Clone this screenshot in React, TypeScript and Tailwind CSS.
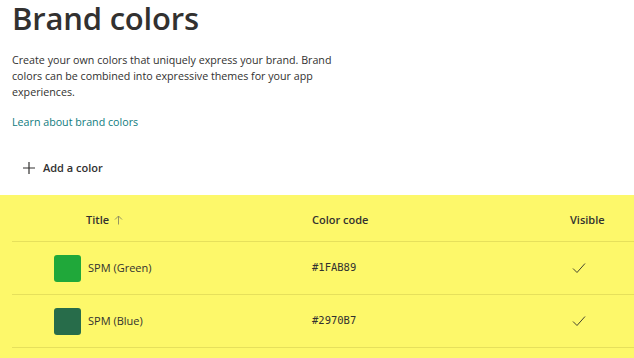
import React from "react";

const rows = [
  { title: "SPM (Green)", code: "#1FAB89", swatch: "bg-[#20a83a]" },
  { title: "SPM (Blue)", code: "#2970B7", swatch: "bg-[#276c4a]" },
];

const Check = () => (
  <svg width="16" height="16" viewBox="0 0 16 16" fill="none">
    <path d="M2 8.5l4 4 8-9" stroke="#45452f" strokeWidth="1" />
  </svg>
);

export default function App() {
  return (
    <div className="w-[634px] h-[358px] overflow-hidden bg-white text-[#323130] font-['Open_Sans',sans-serif]">
      <div className="px-3">
        <h1 className="text-[31px] leading-[36px] font-semibold tracking-[-0.2px]">
          Brand colors
        </h1>
        <p className="mt-[16px] w-[330px] text-[10.7px] leading-[16px]">
          Create your own colors that uniquely express your brand. Brand
          colors can be combined into expressive themes for your app
          experiences.
        </p>
        <a className="block mt-[14px] text-[10.7px] leading-[16px] text-[#0f7c80]">
          Learn about brand colors
        </a>
        <button className="flex items-center gap-[7px] mt-[30px] ml-[10px] h-[16px] text-[11px] font-semibold">
          <svg width="14" height="14" viewBox="0 0 14 14">
            <path d="M7 1v12M1 7h12" stroke="#323130" strokeWidth="1.2" />
          </svg>
          Add a color
        </button>
      </div>

      <div className="mt-[19px] bg-[#fdf86a] pl-3 h-[200px]">
        <div className="grid grid-cols-[74px_226px_258px_1fr] items-center h-[47px] pt-[4px] border-b border-[#e6e05c] text-[11px] font-semibold">
          <div />
          <div className="flex items-center gap-[5px]">
            Title
            <svg width="9" height="10" viewBox="0 0 9 10">
              <path d="M4.5 9.5V1M1 4.5l3.5-3.5 3.5 3.5" stroke="#8a8a60" strokeWidth="0.9" fill="none" />
            </svg>
          </div>
          <div>Color code</div>
          <div>Visible</div>
        </div>
        {rows.map((r) => (
          <div
            key={r.code}
            className="grid grid-cols-[76px_224px_258px_1fr] items-center h-[53px] border-b border-[#e6e05c] text-[11px]"
          >
            <div className="pl-[42px]">
              <div className={`w-[27px] h-[27px] rounded-[3px] ${r.swatch}`} />
            </div>
            <div>{r.title}</div>
            <div className="font-['DejaVu_Sans_Mono',monospace] text-[10.5px]">{r.code}</div>
            <div className="pl-[1px]">
              <Check />
            </div>
          </div>
        ))}
      </div>
    </div>
  );
}
